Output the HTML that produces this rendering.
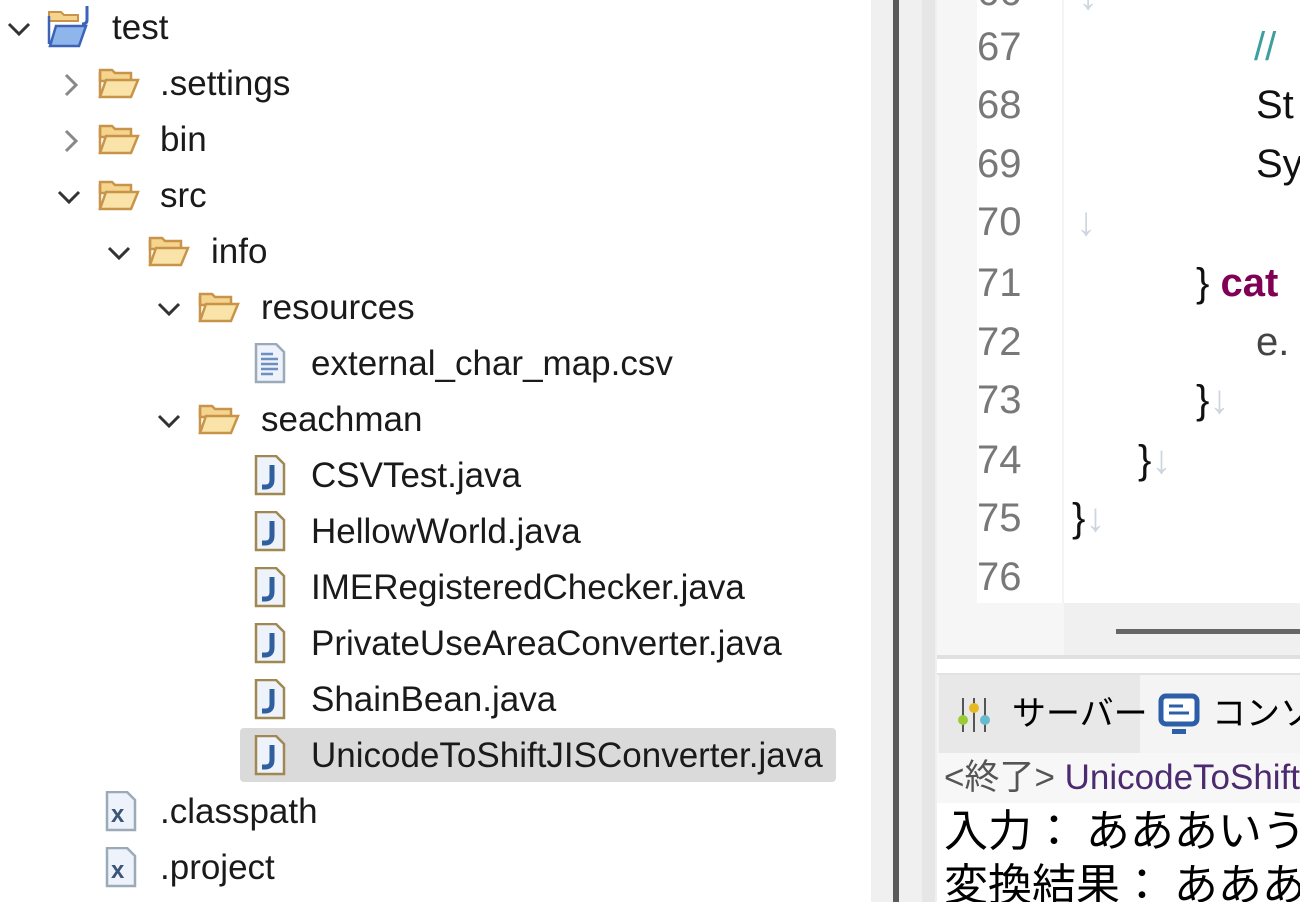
<!DOCTYPE html>
<html><head><meta charset="utf-8"><style>
html,body{margin:0;width:1300px;height:902px;overflow:hidden}
body{background:#fff;position:relative;font-family:"Liberation Sans","Noto Sans CJK JP",sans-serif}
.r{position:absolute;height:56px;line-height:56px;font-size:35px;color:#1a1a1a;white-space:nowrap}
.ab{position:absolute}
.ln{position:absolute;left:977px;width:55px;text-align:left;font-size:40px;color:#787878;line-height:44px}
.c{position:absolute;font-size:40px;color:#111;line-height:44px;white-space:nowrap}
.dn{color:#cdd6e0}
#clip{position:absolute;left:0;top:0;width:1300px;height:902px;overflow:hidden}
</style></head><body><div id="clip">
<svg width="0" height="0" style="position:absolute"><defs>
<g id="fold"><path d="M2 4h12l3 3h16v8H2z" fill="#f5d58e" stroke="#c8944a" stroke-width="2.5"/><path d="M2 31L8 14h32l-7 17z" fill="#f9e3a8" stroke="#c8944a" stroke-width="2.5"/><path d="M2 6v25" stroke="#c8944a" stroke-width="2.5"/></g>
<g id="jf"><path d="M3 1h20l8 8v30H3z" fill="#eef3fb" stroke="#a08850" stroke-width="2.5"/><path d="M19 10v15q0 7-7 7h-3" fill="none" stroke="#2f5f9e" stroke-width="5"/></g>
<g id="xf"><path d="M3 1h20l8 8v30H3z" fill="#eef3fb" stroke="#9aaab8" stroke-width="2.5"/><text x="7" y="31" font-size="24" font-weight="bold" fill="#3a5577" font-family="Liberation Sans">x</text></g>
<g id="tf"><path d="M3 1h20l8 8v30H3z" fill="#eef3fb" stroke="#9aaab8" stroke-width="2.5"/><path d="M8 11h12M8 16h17M8 21h17M8 26h17M8 31h12" stroke="#6d8fbf" stroke-width="2.5"/></g>
<path id="dw" d="M3 8l10 10 10-10" fill="none" stroke="#333" stroke-width="3"/>
<path id="rt" d="M8 3l10 10-10 10" fill="none" stroke="#888" stroke-width="3"/>
</defs></svg>

<div class="ab" style="left:240px;top:728px;width:596px;height:54px;background:#dadada;border-radius:4px"></div>

<svg class="ab" style="left:6px;top:16px" width="26" height="26"><use href="#dw"/></svg>
<svg class="ab" style="left:47px;top:4px" width="50" height="44"><path d="M2 8h12l3 3h14v6H2z" fill="#f5d58e" stroke="#c8944a" stroke-width="2"/><path d="M3 42L9 22h30l-7 20z" fill="#8fb6ea" stroke="#3d63b8" stroke-width="2.5"/><path d="M2 12v28" stroke="#3d63b8" stroke-width="2.5"/><path d="M40 2v14q0 4-5 4" fill="none" stroke="#3d63b8" stroke-width="3"/></svg>
<div class="r" style="left:112px;top:0">test</div>

<svg class="ab" style="left:58px;top:72px" width="26" height="26"><use href="#rt"/></svg>
<svg class="ab" style="left:98px;top:66px" width="44" height="36"><use href="#fold"/></svg>
<div class="r" style="left:160px;top:56px">.settings</div>

<svg class="ab" style="left:58px;top:128px" width="26" height="26"><use href="#rt"/></svg>
<svg class="ab" style="left:98px;top:122px" width="44" height="36"><use href="#fold"/></svg>
<div class="r" style="left:160px;top:112px">bin</div>

<svg class="ab" style="left:56px;top:184px" width="26" height="26"><use href="#dw"/></svg>
<svg class="ab" style="left:98px;top:178px" width="44" height="36"><use href="#fold"/></svg>
<div class="r" style="left:160px;top:168px">src</div>

<svg class="ab" style="left:106px;top:240px" width="26" height="26"><use href="#dw"/></svg>
<svg class="ab" style="left:148px;top:234px" width="44" height="36"><use href="#fold"/></svg>
<div class="r" style="left:211px;top:224px">info</div>

<svg class="ab" style="left:156px;top:296px" width="26" height="26"><use href="#dw"/></svg>
<svg class="ab" style="left:198px;top:290px" width="44" height="36"><use href="#fold"/></svg>
<div class="r" style="left:261px;top:280px">resources</div>

<svg class="ab" style="left:253px;top:343px" width="34" height="42"><use href="#tf"/></svg>
<div class="r" style="left:311px;top:336px">external_char_map.csv</div>

<svg class="ab" style="left:156px;top:408px" width="26" height="26"><use href="#dw"/></svg>
<svg class="ab" style="left:198px;top:402px" width="44" height="36"><use href="#fold"/></svg>
<div class="r" style="left:261px;top:392px">seachman</div>

<svg class="ab" style="left:253px;top:455px" width="34" height="42"><use href="#jf"/></svg>
<div class="r" style="left:311px;top:448px">CSVTest.java</div>
<svg class="ab" style="left:253px;top:511px" width="34" height="42"><use href="#jf"/></svg>
<div class="r" style="left:311px;top:504px">HellowWorld.java</div>
<svg class="ab" style="left:253px;top:567px" width="34" height="42"><use href="#jf"/></svg>
<div class="r" style="left:311px;top:560px">IMERegisteredChecker.java</div>
<svg class="ab" style="left:253px;top:623px" width="34" height="42"><use href="#jf"/></svg>
<div class="r" style="left:311px;top:616px">PrivateUseAreaConverter.java</div>
<svg class="ab" style="left:253px;top:679px" width="34" height="42"><use href="#jf"/></svg>
<div class="r" style="left:311px;top:672px">ShainBean.java</div>
<svg class="ab" style="left:253px;top:735px" width="34" height="42"><use href="#jf"/></svg>
<div class="r" style="left:311px;top:728px">UnicodeToShiftJISConverter.java</div>

<svg class="ab" style="left:104px;top:791px" width="34" height="42"><use href="#xf"/></svg>
<div class="r" style="left:160px;top:784px">.classpath</div>
<svg class="ab" style="left:104px;top:847px" width="34" height="42"><use href="#xf"/></svg>
<div class="r" style="left:160px;top:840px">.project</div>

<div class="ab" style="left:871px;top:0;width:66px;height:902px;background:#f0f0f0"></div>
<div class="ab" style="left:893px;top:0;width:6px;height:902px;background:#5a5a5a"></div>
<div class="ab" style="left:922px;top:0;width:13px;height:902px;background:#e6e6e6"></div>

<div class="ab" style="left:937px;top:0;width:363px;height:658px;background:#fff"></div>
<div class="ab" style="left:937px;top:0;width:40px;height:658px;background:#f6f6f6"></div>
<div class="ab" style="left:1062px;top:0;width:2px;height:603px;background:#f4f4f4"></div>
<div class="ab" style="left:977px;top:603px;width:323px;height:52px;background:#f0f0f0"></div>
<div class="ab" style="left:937px;top:603px;width:127px;height:52px;background:#f6f6f6"></div>
<div class="ab" style="left:1116px;top:629px;width:184px;height:5px;background:#666"></div>
<div class="ab" style="left:937px;top:655px;width:363px;height:4px;background:#e0e0e0"></div>
<div class="ln" style="top:-30px">66</div>
<div class="ln" style="top:25px">67</div>
<div class="ln" style="top:83px">68</div>
<div class="ln" style="top:142px">69</div>
<div class="ln" style="top:200px">70</div>
<div class="ln" style="top:261px">71</div>
<div class="ln" style="top:320px">72</div>
<div class="ln" style="top:378px">73</div>
<div class="ln" style="top:438px">74</div>
<div class="ln" style="top:496px">75</div>
<div class="ln" style="top:555px">76</div>
<div class="c dn" style="left:1078px;top:-26px">↓</div>
<div class="c" style="left:1254px;top:25px;color:#3f9f9f">//</div>
<div class="c" style="left:1256px;top:83px">St</div>
<div class="c" style="left:1256px;top:142px">Sy</div>
<div class="c dn" style="left:1076px;top:200px">↓</div>
<div class="c" style="left:1196px;top:261px">} <b style="color:#7f0055">cat</b></div>
<div class="c" style="left:1256px;top:320px;color:#444">e.</div>
<div class="c" style="left:1196px;top:378px">}<span class="dn">↓</span></div>
<div class="c" style="left:1138px;top:438px">}<span class="dn">↓</span></div>
<div class="c" style="left:1072px;top:496px">}<span class="dn">↓</span></div>

<div class="ab" style="left:937px;top:673px;width:363px;height:80px;background:#f4f4f4;border-top:2px solid #e2e2e2"></div>
<div class="ab" style="left:939px;top:675px;width:201px;height:78px;background:#e8e8e8"></div>
<svg class="ab" style="left:956px;top:696px" width="42" height="40"><path d="M7 2v34M18 2v34M29 2v34" stroke="#555" stroke-width="2"/><circle cx="7" cy="24" r="5" fill="#9c3"/><circle cx="18" cy="12" r="5" fill="#e8b820"/><circle cx="29" cy="24" r="5" fill="#6bc"/></svg>
<div class="ab" style="left:1012px;top:690px;font-size:34px;line-height:48px">サーバー</div>
<svg class="ab" style="left:1158px;top:693px" width="44" height="44"><rect x="3" y="3" width="36" height="28" rx="5" fill="#fff" stroke="#2d5fa8" stroke-width="5"/><path d="M11 13h14M11 20h20" stroke="#2d5fa8" stroke-width="3"/><path d="M14 36h14v5H14z" fill="#2d5fa8"/></svg>
<div class="ab" style="left:1212px;top:690px;font-size:34px;line-height:48px;white-space:nowrap">コンソール</div>
<div class="ab" style="left:937px;top:753px;width:363px;height:50px;background:#f7f7f7"></div>
<div class="ab" style="left:944px;top:754px;font-size:35px;line-height:48px;white-space:nowrap;color:#4b2a70"><span style="color:#555">&lt;終了&gt;</span> UnicodeToShiftJISConverter</div>
<div class="ab" style="left:944px;top:800px;font-family:'Noto Sans CJK JP',monospace;font-size:44px;line-height:54px;white-space:nowrap;color:#000">入力：&nbsp;あああいう<br>変換結果：&nbsp;あああ</div>
</div></body></html>
